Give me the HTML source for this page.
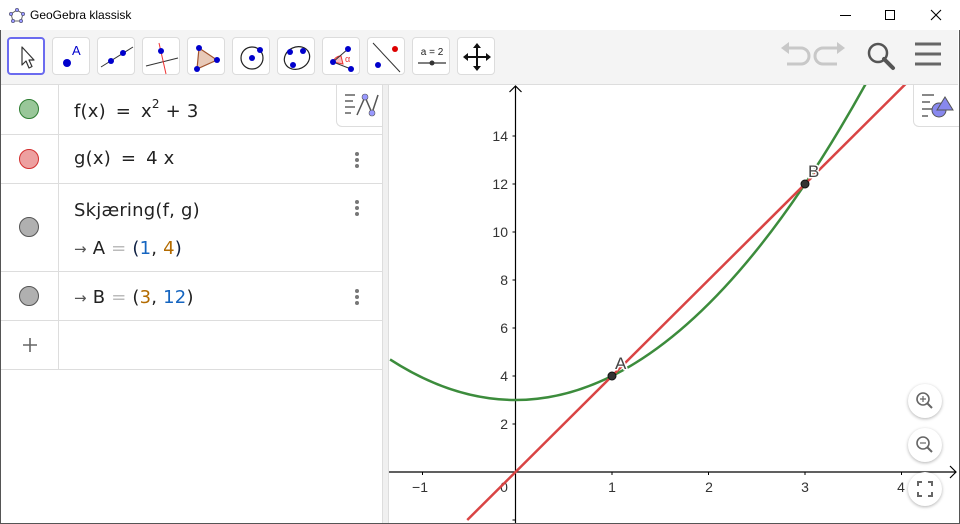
<!DOCTYPE html>
<html><head><meta charset="utf-8"><style>
*{box-sizing:border-box;margin:0;padding:0}
body{width:960px;height:524px;overflow:hidden;background:#fff;font-family:"Liberation Sans",sans-serif;position:relative}
.win{position:absolute;left:0;top:0;width:960px;height:524px;border:1px solid #555;border-top:none}
.title{position:absolute;left:0;top:0;width:960px;height:30px;background:#fff;font-size:12px}
.tb{position:absolute;left:1px;top:30px;width:957px;height:55px;background:#f4f4f4;border-bottom:1px solid #ddd}
.btn{position:absolute;top:7px;width:38px;height:38px;background:#fff;border:1px solid #dcdcdc;border-radius:4px}
.btn svg{position:absolute;left:0;top:0}
.alg{position:absolute;left:1px;top:85px;width:381px;height:438px;background:#fff}
.row{position:absolute;left:0;width:381px;border-bottom:1px solid #ddd}
.row .c{position:absolute;left:0;top:0;width:58px;height:100%;border-right:1px solid #ddd}
.dot{position:absolute;left:18px;width:20px;height:20px;border-radius:50%}
.tx{position:absolute;left:73px;font-size:18px;color:#222;font-family:"DejaVu Sans","Liberation Sans",sans-serif;letter-spacing:0.2px}
.menu{position:absolute;left:354px;width:4px}
.menu i{display:block;width:4px;height:4px;border-radius:50%;background:#777;margin-bottom:2px}
.div{position:absolute;left:382px;top:85px;width:7px;height:438px;background:#f0f0f0;border-left:1px solid #ddd;border-right:1px solid #ddd}
.fab{position:absolute;width:34px;height:34px;border-radius:50%;background:#fff;box-shadow:0 1px 3px rgba(0,0,0,.3)}
</style></head><body>
<div class="win"></div>
<div class="title">
<svg width="16" height="16" style="position:absolute;left:9px;top:8px" viewBox="0 0 16 16"><polygon points="8,2 14,6 12,13 4,13 2,6" fill="none" stroke="#666" stroke-width="1"/><g fill="#99f" stroke="#333" stroke-width=".5"><circle cx="8" cy="2" r="1.8"/><circle cx="14" cy="6" r="1.8"/><circle cx="12" cy="13" r="1.8"/><circle cx="4" cy="13" r="1.8"/><circle cx="2" cy="6" r="1.8"/></g></svg>
<span style="position:absolute;left:30px;top:8px;color:#000">GeoGebra klassisk</span>
<div style="position:absolute;left:840px;top:15px;width:11px;height:1px;background:#000"></div>
<div style="position:absolute;left:885px;top:10px;width:10px;height:10px;border:1px solid #000"></div>
<svg width="12" height="12" style="position:absolute;left:930px;top:9px"><path d="M1 1L11 11M11 1L1 11" stroke="#000" stroke-width="1.1"/></svg>
</div>
<div class="tb">
<div class="btn" style="left:6px;border:2px solid #6b6bef"><svg width="36" height="36"><path d="M13 8 L13 26 L17 22 L20 29 L23 27.5 L20 21 L25 21 Z" fill="#fff" stroke="#333" stroke-width="1.2" stroke-linejoin="round"/></svg></div>
<div class="btn" style="left:51px"><svg width="38" height="38"><circle cx="14" cy="25" r="4" fill="#00c"/><text x="19" y="17" font-size="13" fill="#00c" font-family="Liberation Sans">A</text></svg></div>
<div class="btn" style="left:96px"><svg width="38" height="38"><path d="M3 29L35 9" stroke="#333"/><circle cx="13" cy="23" r="3" fill="#00c"/><circle cx="25" cy="15" r="3" fill="#00c"/></svg></div>
<div class="btn" style="left:141px"><svg width="38" height="38"><path d="M3 28L35 20" stroke="#333"/><path d="M16 5L23 36" stroke="#e33"/><circle cx="18" cy="13" r="3" fill="#00c"/></svg></div>
<div class="btn" style="left:186px"><svg width="38" height="38"><polygon points="11,10 29,22 9,31" fill="#e8c9b8" stroke="#a0522d" stroke-width="1.2"/><circle cx="11" cy="10" r="3" fill="#00c"/><circle cx="29" cy="22" r="3" fill="#00c"/><circle cx="9" cy="31" r="3" fill="#00c"/></svg></div>
<div class="btn" style="left:231px"><svg width="38" height="38"><circle cx="19" cy="20" r="11" fill="none" stroke="#222" stroke-width="1.2"/><circle cx="19" cy="20" r="3" fill="#00c"/><circle cx="27" cy="12" r="3" fill="#00c"/></svg></div>
<div class="btn" style="left:276px"><svg width="38" height="38"><ellipse cx="19" cy="20" rx="13" ry="11" transform="rotate(-25 19 20)" fill="none" stroke="#222" stroke-width="1.2"/><circle cx="12" cy="14" r="3" fill="#00c"/><circle cx="25" cy="13" r="3" fill="#00c"/><circle cx="15" cy="27" r="3" fill="#00c"/></svg></div>
<div class="btn" style="left:321px"><svg width="38" height="38"><path d="M10 24 A8 8 0 0 1 18 18 L20 26 Z" fill="#f8c0c0" stroke="#e33"/><path d="M25 11L10 24L28 31" fill="none" stroke="#333"/><circle cx="25" cy="11" r="3" fill="#00c"/><circle cx="10" cy="24" r="3" fill="#00c"/><circle cx="28" cy="31" r="3" fill="#00c"/><text x="22" y="24" font-size="9" fill="#e33">α</text></svg></div>
<div class="btn" style="left:366px"><svg width="38" height="38"><path d="M5 5L32 34" stroke="#333"/><circle cx="27" cy="11" r="3" fill="#d00"/><circle cx="10" cy="27" r="3" fill="#00c"/></svg></div>
<div class="btn" style="left:411px"><svg width="38" height="38"><text x="19" y="17" font-size="10" fill="#222" text-anchor="middle">a = 2</text><path d="M5 25H33" stroke="#333" stroke-width="1.2"/><circle cx="19" cy="25" r="2.5" fill="#333"/></svg></div>
<div class="btn" style="left:456px"><svg width="38" height="38"><path d="M19 7V31M7 19H31" stroke="#111" stroke-width="2"/><path d="M19 5L15 10H23ZM19 33L15 28H23ZM5 19L10 15V23ZM33 19L28 15V23Z" fill="#111"/></svg></div>
<svg width="180" height="40" style="position:absolute;left:776px;top:8px"><g fill="none" stroke="#c8c8c8" stroke-width="3"><path d="M10 10 H24 A8 8 0 0 1 24 26 H10"/><path d="M46 10 H62 M46 10 A8 8 0 0 0 46 26 H60"/></g><path d="M4 10L12 4V16Z" fill="#c8c8c8"/><path d="M68 10L60 4V16Z" fill="#c8c8c8"/><circle cx="101" cy="15" r="9" fill="none" stroke="#555" stroke-width="2.5"/><path d="M107 21L116 30" stroke="#555" stroke-width="4" stroke-linecap="round"/><path d="M138 6H164M138 16H164M138 26H164" stroke="#666" stroke-width="3"/></svg>
</div>
<div class="alg">
<div class="row" style="top:0;height:50px"><div class="c"></div><div class="dot" style="top:14px;background:#99c799;border:1px solid #2e7d32"></div><div class="tx" style="top:14px">f(x) <span style="margin:0 4px">=</span> x<sup style="font-size:12px;position:relative;top:-2px">2</sup> + 3</div>
<div style="position:absolute;left:335px;top:0;width:48px;height:42px;background:#fff;border:1px solid #ddd;border-top:none;border-right:none;border-radius:0 0 0 6px"><svg width="40" height="30" style="position:absolute;left:6px;top:6px"><path d="M2 4H12M2 10H10M2 16H12M2 22H8" stroke="#888" stroke-width="2"/><path d="M14 24L22 6L29 22L35 4" fill="none" stroke="#555" stroke-width="1.5"/><circle cx="22" cy="6" r="3" fill="#99f" stroke="#555" stroke-width=".6"/><circle cx="29" cy="22" r="3" fill="#99f" stroke="#555" stroke-width=".6"/></svg></div></div>
<div class="row" style="top:50px;height:49px"><div class="c"></div><div class="dot" style="top:14px;background:#eda0a0;border:1px solid #d32f2f"></div><div class="tx" style="top:13px">g(x) <span style="margin:0 4px">=</span> 4 x</div><div class="menu" style="top:17px"><i></i><i></i><i></i></div></div>
<div class="row" style="top:99px;height:88px"><div class="c"></div><div class="dot" style="top:33px;background:#b0b0b0;border:1px solid #555"></div><div class="tx" style="top:16px">Skjæring(f, g)</div><div class="tx" style="top:54px"><span style="color:#555;font-size:15px">→</span> A <span style="color:#bbb">=</span> <span style="color:#124">(</span><span style="color:#1565c0">1</span>, <span style="color:#b36b00">4</span><span style="color:#124">)</span></div><div class="menu" style="top:116px;top:16px"><i></i><i></i><i></i></div></div>
<div class="row" style="top:187px;height:49px"><div class="c"></div><div class="dot" style="top:14px;background:#b0b0b0;border:1px solid #555"></div><div class="tx" style="top:15px"><span style="color:#555;font-size:15px">→</span> B <span style="color:#bbb">=</span> (<span style="color:#b36b00">3</span>, <span style="color:#1565c0">12</span>)</div><div class="menu" style="top:17px"><i></i><i></i><i></i></div></div>
<div class="row" style="top:236px;height:49px"><div class="c"></div><svg width="16" height="16" style="position:absolute;left:21px;top:16px"><path d="M8 1V15M1 8H15" stroke="#666" stroke-width="1.6"/></svg></div>
</div>
<div class="div"></div>
<svg width="569" height="438" style="position:absolute;left:389px;top:85px" viewBox="389 85 569 438" font-family="Liberation Sans" font-size="14">
<g stroke="#000" stroke-width="1.2" fill="none"><path d="M389 472H956M950 466L956 472L950 478"/><path d="M515.5 523V86M509.5 92L515.5 86L521.5 92"/></g>
<g stroke="#000"><path d="M422.5 472v3M612 472v3M708.5 472v3M805 472v3M901.5 472v3"/><path d="M512.5 424h3M512.5 376h3M512.5 328h3M512.5 280h3M512.5 232h3M512.5 184h3M512.5 136h3M512.5 520h3"/></g>
<g fill="#333" text-anchor="middle"><text x="420" y="492">−1</text><text x="504" y="492">0</text><text x="612" y="492">1</text><text x="709" y="492">2</text><text x="805" y="492">3</text><text x="901" y="492">4</text></g>
<g fill="#333" text-anchor="end"><text x="508" y="429">2</text><text x="508" y="381">4</text><text x="508" y="333">6</text><text x="508" y="285">8</text><text x="508" y="237">10</text><text x="508" y="189">12</text><text x="508" y="141">14</text></g>
<path d="M390.05 359.44 Q631.3 515.44 872.55 71.44" fill="none" stroke="#3c8c3c" stroke-width="2.5"/>
<path d="M467.25 520 L911.2 78.4" fill="none" stroke="#d94444" stroke-width="2.5"/>
<circle cx="612" cy="376" r="4" fill="#333" stroke="#111"/><circle cx="805" cy="184" r="4" fill="#333" stroke="#111"/>
<g font-size="17" fill="#444" stroke="#fff" stroke-width="3" paint-order="stroke"><text x="615" y="369">A</text><text x="808" y="177">B</text></g>
</svg>
<div style="position:absolute;left:913px;top:85px;width:46px;height:42px;background:#fff;border:1px solid #ddd;border-top:none;border-right:none;border-radius:0 0 0 6px"><svg width="40" height="32" style="position:absolute;left:6px;top:6px"><path d="M2 4H14M2 11H10M2 18H14M2 25H8" stroke="#888" stroke-width="2"/><circle cx="19" cy="19" r="7" fill="#8888ee" stroke="#555"/><polygon points="25,6 33,19 17,19" fill="#8888ee" stroke="#555"/></svg></div>
<div class="fab" style="left:908px;top:384px"><svg width="34" height="34"><circle cx="15" cy="15" r="6" fill="none" stroke="#666" stroke-width="1.6"/><path d="M19.5 19.5L24 24" stroke="#666" stroke-width="2"/><path d="M12 15h6M15 12v6" stroke="#666" stroke-width="1.2"/></svg></div>
<div class="fab" style="left:908px;top:428px"><svg width="34" height="34"><circle cx="15" cy="15" r="6" fill="none" stroke="#666" stroke-width="1.6"/><path d="M19.5 19.5L24 24" stroke="#666" stroke-width="2"/><path d="M12 15h6" stroke="#666" stroke-width="1.2"/></svg></div>
<div class="fab" style="left:908px;top:472px"><svg width="34" height="34"><path d="M10 14V10H14M20 10H24V14M24 20V24H20M14 24H10V20" fill="none" stroke="#666" stroke-width="2"/></svg></div>
</body></html>
